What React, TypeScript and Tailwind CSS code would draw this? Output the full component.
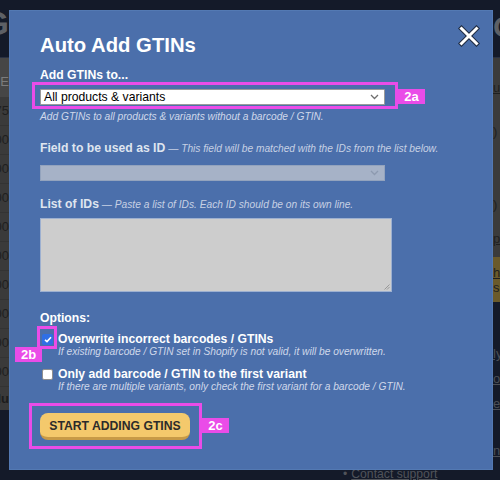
import type { ReactNode } from "react";

const tag =
  "absolute flex items-center justify-center bg-[#ea4ce8] text-[13px] font-bold leading-none text-white";

function Chevron({ color }: { color: string }) {
  return (
    <svg width="9" height="6" viewBox="0 0 9 6" className="shrink-0">
      <polyline
        points="1,1 4.5,4.5 8,1"
        fill="none"
        stroke={color}
        strokeWidth="1.3"
      />
    </svg>
  );
}

function Clip({ children, className }: { children: ReactNode; className?: string }) {
  // shows only the trailing edge of text that runs under the modal
  return (
    <div className={`flex justify-end overflow-hidden whitespace-nowrap ${className ?? ""}`}>
      <span className="shrink-0">{children}</span>
    </div>
  );
}

function BackgroundPage() {
  const rows = ["75", "00", "00", "00", "00", "00", "00", "00", "00", "00"];
  return (
    <div className="flex h-full w-full">
      <div className="flex w-[9px] flex-col">
        <div className="h-[58px] border-b border-[#2a3142] pt-[6px]">
          <Clip className="text-[34px] font-bold leading-[34px] text-[#5d6066]">G</Clip>
        </div>
        <div className="flex flex-col bg-[#3a3a3a]">
          <Clip className="h-[39px] items-center bg-[#464646] pt-[8px] text-[13px] text-[#7c7c7c]">
            E
          </Clip>
          {rows.map((r, i) => (
            <Clip
              key={i}
              className="h-[29px] items-center border-b border-[#333] text-[13px] text-[#1f1f1f]"
            >
              {r}
            </Clip>
          ))}
          <Clip className="h-[23px] items-center text-[13px] font-bold text-[#1c1c1c]">Totalu</Clip>
        </div>
      </div>

      <div className="flex flex-1 flex-col justify-end pb-px pl-[334px]">
        <div className="flex items-center gap-[4px] text-[12.2px] leading-[10px] text-[#50535a]">
          <span>•</span>
          <span className="underline">Contact support</span>
        </div>
      </div>

      <div className="flex w-[7px] flex-col">
        <div className="h-[58px] border-b border-[#2a3142] pt-[12px]">
          <div className="overflow-hidden whitespace-nowrap text-[30px] font-bold leading-[30px] text-[#5d6066]">
            O
          </div>
        </div>
        <div className="flex h-[199px] flex-col gap-[14px] overflow-hidden whitespace-nowrap bg-[#3b3b3b] pt-[20px] text-[13px] text-[#1f1f1f]">
          <span className="underline">u</span>
          <span className="pt-[10px]">)</span>
          <span className="pt-[40px]">)</span>
          <span className="underline">pl</span>
        </div>
        <div className="flex h-[45px] flex-col overflow-hidden whitespace-nowrap bg-[#6a5a2b] pt-[8px] text-[13px] leading-[15px] text-[#1f1f1f]">
          <span className="underline">h</span>
          <span>s</span>
        </div>
        <div className="flex flex-col gap-[10px] overflow-hidden whitespace-nowrap pt-[44px] text-[13px] leading-[15px] text-[#4b4f57]">
          <span className="underline">ly</span>
          <span className="underline">oi</span>
          <span className="underline">ec</span>
          <span className="pt-[22px] underline">ns</span>
        </div>
      </div>
    </div>
  );
}

function Option({
  checked,
  title,
  note,
  className,
}: {
  checked: boolean;
  title: string;
  note: string;
  className?: string;
}) {
  return (
    <div className={`flex gap-[5px] pl-[2px] ${className ?? ""}`}>
      {checked ? (
        <div className="mt-[2px] flex size-[11px] shrink-0 items-center justify-center rounded-[2px] bg-[#2f6fe6]">
          <svg width="8" height="7" viewBox="0 0 8 7">
            <polyline points="1,3.8 3,5.6 7,1.2" fill="none" stroke="#fff" strokeWidth="1.6" />
          </svg>
        </div>
      ) : (
        <div className="mt-[2px] size-[11px] shrink-0 rounded-[2px] border border-[#8f8f8f] bg-white" />
      )}
      <div className="flex flex-col">
        <span className="text-[12.2px] font-bold leading-[14px] text-white">{title}</span>
        <span className="text-[10.2px] italic leading-[12px] text-[#cfd8ea]">{note}</span>
      </div>
    </div>
  );
}

function AutoAddModal() {
  return (
    <div className="absolute left-[9px] top-[10px] flex h-[460px] w-[484px] flex-col border border-[#5379b3] bg-[#4b6fab] pl-[30px] pt-[22px]">
      <button className="absolute right-[14px] top-[14px] size-[20px]" aria-label="Close">
        <svg width="22" height="22" viewBox="0 0 22 22">
          <g strokeLinecap="square">
            <line x1="3.5" y1="3.5" x2="18.5" y2="18.5" stroke="#1e2a40" strokeWidth="5" />
            <line x1="18.5" y1="3.5" x2="3.5" y2="18.5" stroke="#1e2a40" strokeWidth="5" />
            <line x1="3.5" y1="3.5" x2="18.5" y2="18.5" stroke="#fff" strokeWidth="3" />
            <line x1="18.5" y1="3.5" x2="3.5" y2="18.5" stroke="#fff" strokeWidth="3" />
          </g>
        </svg>
      </button>

      <h1 className="text-[20.3px] font-bold leading-[24px] text-white">Auto Add GTINs</h1>

      <div className="mt-[11px] text-[12.2px] font-bold leading-[14px] text-white">Add GTINs to...</div>
      <div className="relative mt-[7px]">
        <div className="flex h-[16px] w-[345px] items-center justify-between rounded-[1px] border border-[#9a9a9a] bg-white pl-[3px] pr-[5px] text-[12.2px] leading-none text-black">
          <span>All products &amp; variants</span>
          <Chevron color="#6f6f6f" />
        </div>
        <div className="absolute -left-[8px] -top-[7px] h-[27px] w-[366px] border-[3px] border-[#ea4ce8]" />
        <div className={`${tag} left-[358px] top-0 h-[15px] w-[27px]`}>2a</div>
      </div>
      <div className="mt-[6px] text-[10.2px] italic leading-[12px] text-[#cfd8ea]">
        Add GTINs to all products &amp; variants without a barcode / GTIN.
      </div>

      <div className="mt-[17px] whitespace-nowrap leading-[14px] text-[#dfe5ef]">
        <span className="text-[12.2px] font-bold">Field to be used as ID</span>
        <span className="text-[10.2px] italic text-[#c7d1e4]">
          {" "}— This field will be matched with the IDs from the list below.
        </span>
      </div>
      <div className="mt-[9px] flex h-[16px] w-[345px] items-center justify-end border border-[#93a3bd] bg-[#a6b2c7] pr-[5px]">
        <Chevron color="#8d9ab0" />
      </div>

      <div className="mt-[15px] whitespace-nowrap leading-[14px] text-[#dfe5ef]">
        <span className="text-[12.2px] font-bold">List of IDs</span>
        <span className="text-[10.2px] italic text-[#c7d1e4]">
          {" "}— Paste a list of IDs. Each ID should be on its own line.
        </span>
      </div>
      <div className="relative mt-[6px] h-[74px] w-[352px] border border-[#9db0d0] bg-[#cdcdcd]">
        <svg width="6" height="6" viewBox="0 0 6 6" className="absolute bottom-[1px] right-[1px]">
          <line x1="0.5" y1="5.5" x2="5.5" y2="0.5" stroke="#8a8a8a" strokeWidth="0.8" />
          <line x1="3" y1="5.5" x2="5.5" y2="3" stroke="#8a8a8a" strokeWidth="0.8" />
        </svg>
      </div>

      <div className="mt-[19px] text-[12.2px] font-bold leading-[14px] text-white">Options:</div>
      <div className="relative mt-[7px]">
        <Option
          checked
          title="Overwrite incorrect barcodes / GTINs"
          note="If existing barcode / GTIN set in Shopify is not valid, it will be overwritten."
        />
        <div className="absolute -left-[3px] -top-[6px] h-[23px] w-[20px] border-[3px] border-[#ea4ce8]" />
        <div className={`${tag} -left-[25px] top-[15px] h-[15px] w-[27px]`}>2b</div>
      </div>
      <Option
        className="mt-[9px]"
        checked={false}
        title="Only add barcode / GTIN to the first variant"
        note="If there are multiple variants, only check the first variant for a barcode / GTIN."
      />

      <div className="relative mt-[20px] self-start">
        <button className="flex h-[27px] w-[150px] items-center justify-center rounded-[8px] border-b-[3px] border-[#c79a47] bg-[#f4c96c] pt-[2px] text-[12.2px] font-bold leading-none text-[#2b2b2b]">
          START ADDING GTINS
        </button>
        <div className="absolute -left-[11px] -top-[10px] h-[46px] w-[173px] border-[3px] border-[#ea4ce8]" />
        <div className={`${tag} left-[162px] top-[5px] h-[15px] w-[27px]`}>2c</div>
      </div>
    </div>
  );
}

export default function App() {
  return (
    <div className="relative h-[480px] w-[500px] overflow-hidden bg-[#141a29] font-['Liberation_Sans',Arial,sans-serif]">
      <BackgroundPage />
      <AutoAddModal />
    </div>
  );
}
